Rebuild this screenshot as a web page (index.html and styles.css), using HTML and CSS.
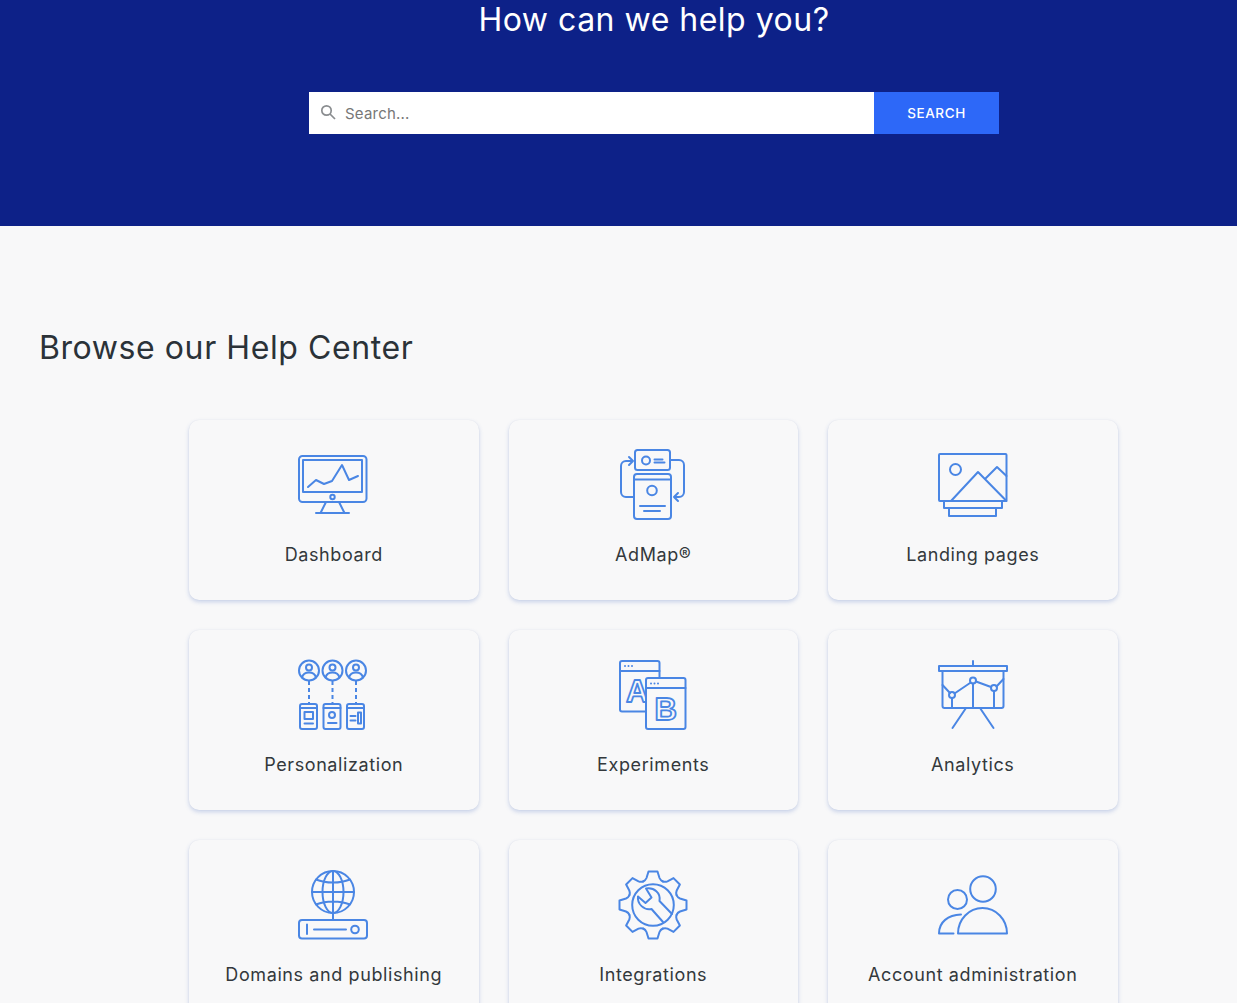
FILE: index.html
```html
<!DOCTYPE html>
<html lang="en">
<head>
<meta charset="utf-8">
<title>Help Center</title>
<link rel="stylesheet" href="styles.css">
</head>
<body>
<header class="hero">
  <h1 class="hero-title">How can we help you?</h1>
  <form class="search">
    <div class="search-field">
      <svg class="search-icon" viewBox="0 0 16 16"><circle cx="6.5" cy="6.5" r="4.7"/><path d="M10 10l5 5"/></svg>
      <span class="search-placeholder">Search...</span>
    </div>
    <div class="search-button">SEARCH</div>
  </form>
</header>
<main class="content">
  <h2 class="section-title">Browse our Help Center</h2>
  <div class="grid">
    <a class="card">
      <svg class="icon" viewBox="-1 0 100 80">
        <rect x="14" y="11" width="67.5" height="46" rx="3.5"/>
        <rect x="18" y="15" width="59" height="32"/>
        <circle cx="47.5" cy="52" r="2.2"/>
        <path d="M41 57l-5.5 11M54 57l5.5 11M31 68h33"/>
        <path d="M23 42l8-7 8 4 8-3 10-16 7 15 9-4"/>
      </svg>
      <span class="label">Dashboard</span>
    </a>
    <a class="card">
      <svg class="icon" viewBox="3 5 100 80">
        <rect x="35" y="10" width="35" height="20" rx="2.5"/>
        <circle cx="46" cy="20.5" r="4"/>
        <path d="M54.500 19.500h8M54.500 22.500h10"/>
        <rect x="34" y="34" width="37" height="45" rx="3"/>
        <path d="M34 39.500h37"/>
        <circle cx="52" cy="50.500" r="4.800"/>
        <path d="M40 66h25M44 71h16"/>
        <path d="M34 57h-8a5 5 0 0 1-5-5V26a5 5 0 0 1 5-5h7M29 17l4 4-4 4"/>
        <path d="M70 20h9a5 5 0 0 1 5 5v27a5 5 0 0 1-5 5h-5M78 53l-4 4 4 4"/>
      </svg>
      <span class="label">AdMap®</span>
    </a>
    <a class="card">
      <svg class="icon" viewBox="-2 5 100 80">
        <rect x="14" y="14" width="67.500" height="47" rx="1"/>
        <circle cx="30.500" cy="29.500" r="5.500"/>
        <path d="M26 61l27-29 28.500 29M60 39l12-12 9.500 9"/>
        <path d="M19 61v7h58v-7M24 68v8h47v-8"/>
      </svg>
      <span class="label">Landing pages</span>
    </a>
    <a class="card">
      <svg class="icon" viewBox="-1 5 100 80">
        <circle cx="24" cy="20.500" r="10"/><circle cx="47.500" cy="20.500" r="10"/><circle cx="71" cy="20.500" r="10"/>
        <circle cx="24" cy="17.500" r="3"/><circle cx="47.500" cy="17.500" r="3"/><circle cx="71" cy="17.500" r="3"/>
        <path d="M17 27.500c1-4 4-5 7-5s6 1 7 5M40.500 27.500c1-4 4-5 7-5s6 1 7 5M64 27.500c1-4 4-5 7-5s6 1 7 5"/>
        <path class="dashed" d="M24 31v23M47.500 31v23M71 31v23"/>
        <rect x="15" y="54" width="17" height="25" rx="2"/><rect x="38.500" y="54" width="17" height="25" rx="2"/><rect x="62" y="54" width="17" height="25" rx="2"/>
        <path d="M15 58h17M38.500 58h17M62 58h17"/>
        <rect x="19.500" y="62" width="8.500" height="7"/><path d="M19.500 73.500h8.500"/>
        <circle cx="47" cy="65" r="3"/><path d="M43 73h8.500"/>
        <path d="M65.500 66h5M65.500 70.500h5"/><rect x="73" y="62.500" width="3" height="11"/>
      </svg>
      <span class="label">Personalization</span>
    </a>
    <a class="card">
      <svg class="icon" viewBox="-2 5 100 80">
        <rect x="15" y="11" width="39.500" height="50.500" rx="2"/>
        <path d="M15 21h39.500"/>
        <path class="dots" d="M20 16h.01M23.500 16h.01M27 16h.01"/>
        <text class="glyph" x="21" y="52">A</text>
        <rect class="opaque" x="41" y="28" width="39.500" height="51" rx="2"/>
        <path d="M41 38h39.500"/>
        <path class="dots" d="M46 33.500h.01M49.500 33.500h.01M53 33.500h.01"/>
        <text class="glyph" x="49.500" y="70">B</text>
      </svg>
      <span class="label">Experiments</span>
    </a>
    <a class="card">
      <svg class="icon" viewBox="-2 5 100 80">
        <path d="M48 11v5"/>
        <rect x="14" y="16" width="68" height="5"/>
        <path d="M17.500 21v35a2 2 0 0 0 2 2h57a2 2 0 0 0 2-2V21"/>
        <path d="M17.500 35l7.500 8M29.500 43.500L45 33M51 31.500l15 5.500M71.500 36.500l7-7.500"/>
        <circle cx="27" cy="45" r="3"/><circle cx="48" cy="30.500" r="3"/><circle cx="69" cy="38" r="3"/>
        <path d="M27 48v10M48 33.500V58M69 41v17"/>
        <path d="M41 58L27.500 78M55 58l13.500 20"/>
      </svg>
      <span class="label">Analytics</span>
    </a>
    <a class="card">
      <svg class="icon" viewBox="-1 5 100 80">
        <circle cx="48" cy="32" r="21"/>
        <ellipse cx="48" cy="32" rx="10.500" ry="21"/>
        <path d="M48 11v49M27 32h42M31 19.500c10 4 24 4 34 0M31 44.500c10-4 24-4 34 0"/>
        <rect x="14" y="60" width="68" height="18.500" rx="3"/>
        <path d="M22 64.500v9.500M29 69.500h32"/>
        <circle cx="70" cy="69.500" r="3.800"/>
      </svg>
      <span class="label">Domains and publishing</span>
    </a>
    <a class="card">
      <svg class="icon" viewBox="-2 5 100 80">
        <defs>
          <path id="gear-tooth" d="M38 21.500Q40.500 20.500 41.500 18L43.500 11.500H52.500L54.500 18Q55.500 20.500 58 21.500"/>
        </defs>
        <use href="#gear-tooth"/>
        <use href="#gear-tooth" transform="rotate(45 48 45)"/>
        <use href="#gear-tooth" transform="rotate(90 48 45)"/>
        <use href="#gear-tooth" transform="rotate(135 48 45)"/>
        <use href="#gear-tooth" transform="rotate(180 48 45)"/>
        <use href="#gear-tooth" transform="rotate(225 48 45)"/>
        <use href="#gear-tooth" transform="rotate(270 48 45)"/>
        <use href="#gear-tooth" transform="rotate(315 48 45)"/>
        <circle cx="48" cy="45" r="20.800"/>
        <path d="M41 28.500C49 27 56 33 54.500 41L67 54M33 36.500C32 44 39 50.500 46.500 49L58 62M33 36.500L40.500 43L46.500 37.500L41 28.500"/>
      </svg>
      <span class="label">Integrations</span>
    </a>
    <a class="card">
      <svg class="icon" viewBox="-2 5 100 80">
        <circle cx="58" cy="29" r="12.800"/>
        <circle cx="32.500" cy="39.500" r="9.500"/>
        <path d="M33 73.500a24.500 25.500 0 0 1 49 0z"/>
        <path d="M28.500 73.500H14C14 62 23 55 36 54.500"/>
      </svg>
      <span class="label">Account administration</span>
    </a>
  </div>
</main>
</body>
</html>
```
FILE: styles.css
```css
html, body {
  margin: 0;
  height: 1003px;
  overflow: hidden;
  background: #f8f8f9;
  font-family: "Inter", "Noto Sans", sans-serif;
}

.hero {
  background: #0d2188;
  height: 226px;
  display: flex;
  flex-direction: column;
  align-items: center;
  padding-left: 71px;
  box-sizing: border-box;
}

.hero-title {
  margin: 0 0 52px;
  font-size: 32px;
  line-height: 40px;
  font-weight: 400;
  color: #fff;
  letter-spacing: 0.5px;
}

.search {
  display: flex;
  width: 690px;
  height: 42px;
  margin: 0;
}

.search-field {
  flex: 1;
  background: #fff;
  display: flex;
  align-items: center;
  padding-left: 11px;
  gap: 9px;
}

.search-icon {
  width: 16px;
  height: 16px;
  fill: none;
  stroke: #8a8d90;
  stroke-width: 1.7;
  margin-top: -3px;
}

.search-placeholder {
  font-size: 15px;
  color: #777;
  letter-spacing: 0.2px;
}

.search-button {
  width: 125px;
  background: #2d68f8;
  color: #fff;
  font-size: 13.500px;
  font-weight: 500;
  letter-spacing: 0.6px;
  display: flex;
  align-items: center;
  justify-content: center;
}

.content {
  padding: 102px 0 0 39px;
}

.section-title {
  margin: 0 0 52px;
  font-size: 32px;
  line-height: 40px;
  font-weight: 400;
  color: #2b3238;
  letter-spacing: 0.58px;
}

.grid {
  display: grid;
  grid-template-columns: repeat(3, 289.500px);
  gap: 30px;
  margin-left: 150px;
}

.card {
  height: 180px;
  box-sizing: border-box;
  background: #f8f8f9;
  border-radius: 10px;
  padding-top: 25px;
  display: flex;
  flex-direction: column;
  align-items: center;
  box-shadow: 0 0 1px rgba(30, 40, 70, 0.08), 0 2px 4px rgba(60, 100, 190, 0.26);
}

.icon {
  width: 100px;
  height: 80px;
  flex: none;
  fill: none;
  stroke: #4a86e4;
  stroke-width: 2;
  stroke-linecap: round;
  stroke-linejoin: round;
}

.dashed {
  stroke-dasharray: 4 3;
  stroke-linecap: butt;
}

.dots {
  stroke-width: 2;
}

.opaque {
  fill: #f8f8f9;
}

.glyph {
  font-family: "Liberation Sans", sans-serif;
  font-weight: 700;
  font-size: 31px;
  stroke-width: 1.800;
}

.label {
  margin-top: 17px;
  font-size: 18px;
  line-height: 26px;
  color: #33383c;
  letter-spacing: 0.6px;
}
```
